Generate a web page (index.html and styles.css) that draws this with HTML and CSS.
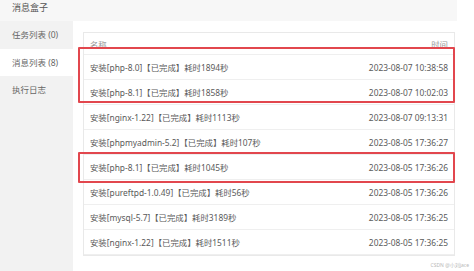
FILE: index.html
```html
<!DOCTYPE html>
<html lang="zh-CN">
<head>
<meta charset="utf-8">
<title>消息盒子</title>
<link rel="stylesheet" href="styles.css">
</head>
<body>
<div class="page">
  <div class="box">
    <div class="title">消息盒子</div>
    <div class="body">
      <div class="sidebar">
        <div class="tab">任务列表 (0)</div>
        <div class="tab active">消息列表 (8)</div>
        <div class="tab">执行日志</div>
      </div>
      <div class="main">
        <div class="table">
          <div class="row head"><span>名称</span><span>时间</span></div>
          <div class="row"><span>安装[php-8.0]【已完成】耗时1894秒</span><span>2023-08-07 10:38:58</span></div>
          <div class="row"><span>安装[php-8.1]【已完成】耗时1858秒</span><span>2023-08-07 10:02:03</span></div>
          <div class="row"><span>安装[nginx-1.22]【已完成】耗时1113秒</span><span>2023-08-07 09:13:31</span></div>
          <div class="row"><span>安装[phpmyadmin-5.2]【已完成】耗时107秒</span><span>2023-08-05 17:36:27</span></div>
          <div class="row"><span>安装[php-8.1]【已完成】耗时1045秒</span><span>2023-08-05 17:36:26</span></div>
          <div class="row"><span>安装[pureftpd-1.0.49]【已完成】耗时56秒</span><span>2023-08-05 17:36:26</span></div>
          <div class="row"><span>安装[mysql-5.7]【已完成】耗时3189秒</span><span>2023-08-05 17:36:25</span></div>
          <div class="row"><span>安装[nginx-1.22]【已完成】耗时1511秒</span><span>2023-08-05 17:36:25</span></div>
          <div class="mark mark-a"></div>
          <div class="mark mark-b"></div>
        </div>
      </div>
    </div>
  </div>
  <div class="watermark">CSDN @小刘jace</div>
</div>
</body>
</html>
```

FILE: styles.css
```css
html, body {
  margin: 0;
  padding: 0;
  background: #ffffff;
}

body {
  font-family: "Noto Sans", "Noto Sans CJK SC", sans-serif;
  color: #555555;
}

.page {
  position: relative;
  width: 474px;
  height: 271px;
  overflow: hidden;
}

.box {
  width: 457px;
  height: 271px;
  display: flex;
  flex-direction: column;
}

.title {
  height: 21px;
  line-height: 15px;
  padding-left: 12px;
  font-size: 9px;
  color: #555555;
  background: #f7f7f7;
  box-sizing: border-box;
}

.body {
  flex: 1;
  display: flex;
}

.sidebar {
  width: 73px;
  background: #f2f2f2;
  display: flex;
  flex-direction: column;
}

.tab {
  height: 27.5px;
  line-height: 27px;
  padding-left: 12px;
  font-size: 8.5px;
  color: #666666;
}

.tab.active {
  background: #ffffff;
}

.main {
  flex: 1;
  padding: 11px 2px 0 10px;
}

.table {
  position: relative;
  border: 1px solid #e9e9e9;
}

.row {
  height: 25px;
  display: flex;
  align-items: center;
  justify-content: space-between;
  padding: 0 6px 0 6px;
  border-bottom: 1px solid #efefef;
  box-sizing: border-box;
  font-size: 8.4px;
  color: #5a5a5a;
  white-space: nowrap;
}

.row:last-of-type {
  border-bottom: none;
}

.row.head {
  height: 22px;
  padding-top: 1px;
  color: #999999;
}

.mark {
  position: absolute;
  left: -6px;
  right: -1px;
  border: 2px solid #e2474e;
  border-radius: 1px;
  box-sizing: border-box;
}

.mark-a {
  top: 14px;
  height: 56px;
}

.mark-b {
  top: 119px;
  height: 31px;
}

.watermark {
  position: absolute;
  right: 5px;
  bottom: 3px;
  font-size: 5px;
  color: #b8b8b8;
}
```
